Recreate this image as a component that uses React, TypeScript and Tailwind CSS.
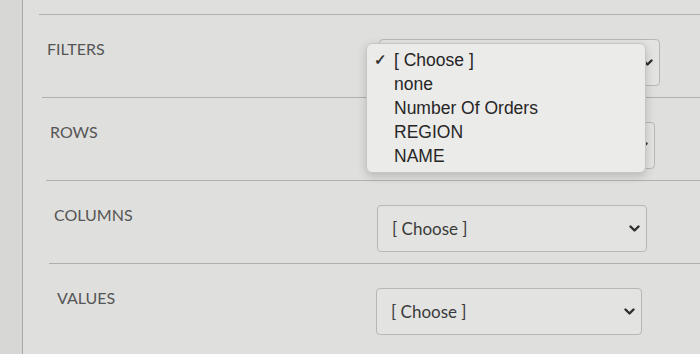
import React from 'react';

type Row = {
  label: string;
  rowClass: string;
  selectClass: string;
  covered?: boolean;
};

// the photo is a little skewed, so each row sits a few px further right
const rows: Row[] = [
  { label: 'FILTERS', rowClass: 'ml-[16px]', selectClass: 'ml-[340px] w-[281px]', covered: true },
  { label: 'ROWS', rowClass: 'ml-[19px]', selectClass: 'ml-[337px] w-[276px]', covered: true },
  { label: 'COLUMNS', rowClass: 'ml-[23px]', selectClass: 'ml-[331px] w-[270px]' },
  { label: 'VALUES', rowClass: 'ml-[26px]', selectClass: 'ml-[327px] w-[266px]' },
];

const options = ['[ Choose ]', 'none', 'Number Of Orders', 'REGION', 'NAME'];

const Chevron: React.FC = () => (
  <svg width="11" height="7" viewBox="0 0 11 7" fill="none" stroke="#2f2f2f" strokeWidth="2.4" strokeLinecap="round" strokeLinejoin="round">
    <path d="M1.5 1.5l4 4 4-4" />
  </svg>
);

const App: React.FC = () => {
  return (
    <div className="relative w-[700px] h-[354px] overflow-hidden bg-[#dfdfdd] flex" style={{ fontFamily: 'Lato, "Open Sans", sans-serif' }}>
      {/* left gutter */}
      <div className="w-[23px] shrink-0 bg-[#d7d7d5] border-r border-[#a9a9a7]" />

      {/* form rows */}
      <div className="flex-1 pt-[14px]">
        {rows.map((row) => (
          <div key={row.label} className={`${row.rowClass} h-[83px] border-t border-[#b0b0ae] relative`}>
            <div className="absolute left-[8px] top-[24px] text-[16px] leading-[20px] text-[#555555]">
              {row.label}
            </div>
            <div className={`${row.selectClass} mt-[24px] h-[47px] rounded-[4px] border border-[#b7b7b5] bg-[#e3e3e1] flex items-center justify-between pl-[14px] pr-[6px]`}>
              <span className="text-[17px] text-[#3a3a3a]">{row.covered ? '' : '[ Choose ]'}</span>
              <Chevron />
            </div>
          </div>
        ))}
      </div>

      {/* open dropdown menu */}
      <div
        className="absolute left-[366px] top-[43px] w-[280px] h-[130px] rounded-[6px] bg-[#ebebe9] border border-[#c6c6c4] shadow-[0_3px_10px_rgba(0,0,0,0.18)] pt-[4px]"
        style={{ fontFamily: '"Liberation Sans", Arial, sans-serif' }}
      >
        {options.map((opt, i) => (
          <div key={opt} className="flex items-center h-[24px] text-[17.5px] text-[#262626]">
            <span className="w-[27px] pl-[7px] text-[15px] font-bold text-[#333]">{i === 0 ? '✓' : ''}</span>
            <span>{opt}</span>
          </div>
        ))}
      </div>
    </div>
  );
};

export default App;
